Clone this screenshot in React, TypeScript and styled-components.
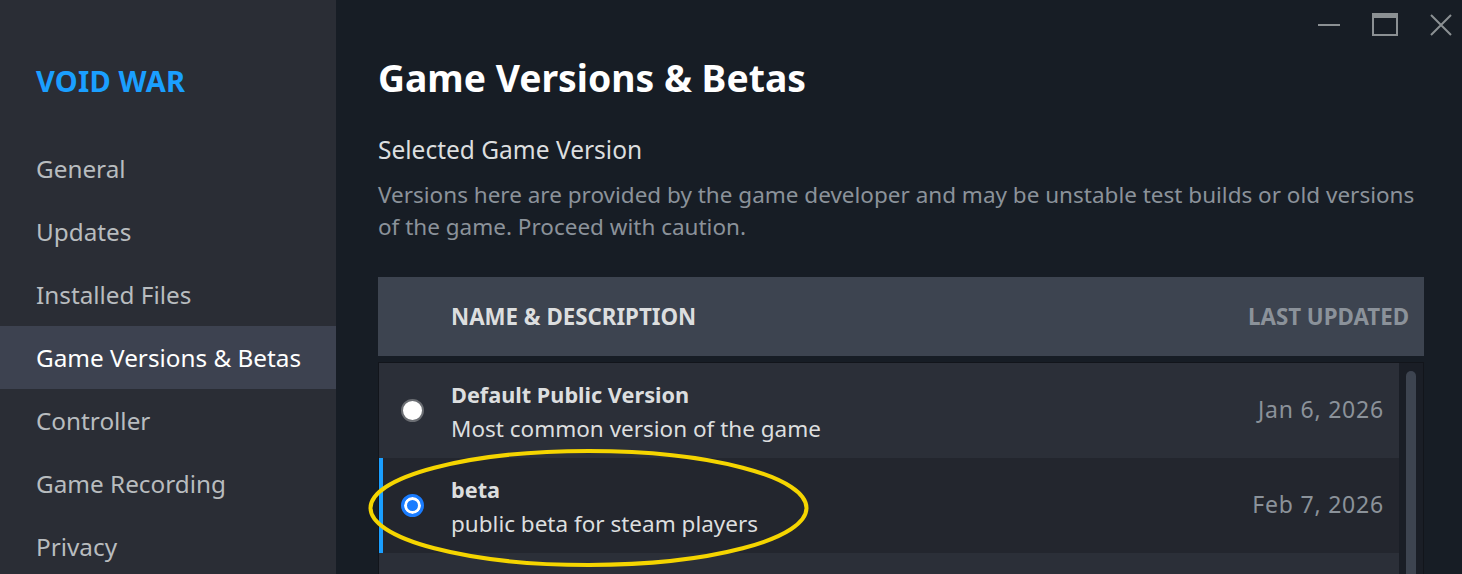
import React from "react";
import styled, { createGlobalStyle } from "styled-components";

const Global = createGlobalStyle`
  html, body { margin: 0; padding: 0; background: #171d25; }
  body { font-family: "Noto Sans", "Open Sans", sans-serif; -webkit-font-smoothing: antialiased; }
  * { box-sizing: border-box; }
`;

const Page = styled.div`
  position: relative;
  display: flex;
  width: 1462px;
  height: 574px;
  overflow: hidden;
  background: #171d25;
`;

const Sidebar = styled.nav`
  width: 336px;
  flex: none;
  background: #2a2d35;
  display: flex;
  flex-direction: column;
`;

const GameTitle = styled.div`
  height: 137px;
  flex: none;
  padding: 62px 0 0 36px;
  color: #1a9fff;
  font-weight: 700;
  font-size: 29px;
  line-height: 38px;
  letter-spacing: 0.2px;
`;

const NavItem = styled.div<{ $active?: boolean }>`
  height: 63px;
  flex: none;
  display: flex;
  align-items: center;
  padding-left: 36px;
  font-size: 24.3px;
  color: ${(p) => (p.$active ? "#ffffff" : "#b8bcbf")};
  background: ${(p) => (p.$active ? "#3d4250" : "transparent")};
`;

const Main = styled.main`
  flex: 1;
  min-width: 0;
  display: flex;
  flex-direction: column;
  padding: 0 38px 0 42px;
  & > * { flex: none; }
`;

const TitleBar = styled.div`
  height: 50px;
  display: flex;
  justify-content: flex-end;
  align-items: center;
  margin-right: -45px;
`;

const WinButton = styled.div`
  width: 56px;
  height: 50px;
  display: flex;
  align-items: center;
  justify-content: center;
`;

const Heading = styled.h1`
  margin: 3px 0 0;
  font-size: 37.3px;
  line-height: 50px;
  font-weight: 700;
  color: #ffffff;
`;

const SubHeading = styled.h2`
  margin: 32px 0 0;
  font-size: 24.5px;
  line-height: 30px;
  font-weight: 400;
  color: #dcdedf;
`;

const Description = styled.p`
  margin: 14px 0 0;
  font-size: 22.5px;
  line-height: 32px;
  color: #8b929a;
`;

const TableHeader = styled.div`
  margin-top: 34px;
  height: 79px;
  background: #3d4450;
  display: flex;
  align-items: center;
  padding: 0 15px 0 73px;
  font-size: 22.3px;
  font-weight: 700;
`;

const HeaderCell = styled.div<{ $muted?: boolean }>`
  flex: ${(p) => (p.$muted ? "none" : "1")};
  color: ${(p) => (p.$muted ? "#8b929a" : "#dcdedf")};
`;

const ListBox = styled.div`
  margin-top: 6px;
  && { flex: 1; }
  min-height: 0;
  overflow: hidden;
  display: flex;
  background: #1c2029;
  border-top: 1px solid #12151b;
  border-left: 1px solid #12151b;
  border-right: 1px solid #12151b;
`;

const Rows = styled.div`
  flex: 1;
  display: flex;
  flex-direction: column;
`;

const Row = styled.div<{ $selected?: boolean }>`
  height: 95px;
  flex: none;
  display: flex;
  align-items: center;
  padding-right: 15px;
  background: ${(p) => (p.$selected ? "#23262e" : "#2b2f38")};
  border-left: 4px solid ${(p) => (p.$selected ? "#1a9fff" : "transparent")};
`;

const RadioCell = styled.div`
  width: 58px;
  flex: none;
  display: flex;
  justify-content: center;
`;

const Radio = styled.div<{ $checked?: boolean }>`
  width: 23px;
  height: 23px;
  border-radius: 50%;
  background: ${(p) => (p.$checked ? "#1a7cff" : "#ffffff")};
  border: ${(p) => (p.$checked ? "3px solid #1a7cff" : "2px solid #6b6e73")};
  box-shadow: ${(p) => (p.$checked ? "inset 0 0 0 3px #ffffff" : "none")};
`;

const TextCell = styled.div`
  flex: 1;
  display: flex;
  flex-direction: column;
  gap: 3px;
  padding-left: 10px;
  padding-top: 2px;
`;

const RowTitle = styled.div`
  font-size: 21.7px;
  line-height: 30px;
  font-weight: 700;
  color: #dcdedf;
`;

const RowDesc = styled.div`
  font-size: 22.5px;
  line-height: 31px;
  color: #dcdedf;
`;

const DateCell = styled.div`
  font-size: 23px;
  letter-spacing: 0.8px;
  color: #8b929a;
  margin-top: -4px;
`;

const ScrollTrack = styled.div`
  width: 24px;
  flex: none;
  background: #1a1e26;
  padding: 8px 7px 0 7px;
`;

const Thumb = styled.div`
  height: 300px;
  width: 10px;
  border-radius: 5px;
  background: #3d4450;
`;

const Annotation = styled.svg`
  position: absolute;
  left: 0;
  top: 0;
  pointer-events: none;
`;

const navItems = [
  "General",
  "Updates",
  "Installed Files",
  "Game Versions & Betas",
  "Controller",
  "Game Recording",
  "Privacy",
];

const versions = [
  { name: "Default Public Version", desc: "Most common version of the game", date: "Jan 6, 2026", selected: false },
  { name: "beta", desc: "public beta for steam players", date: "Feb 7, 2026", selected: true },
  { name: "", desc: "", date: "", selected: false },
];

export default function App() {
  return (
    <>
      <Global />
      <Page>
        <Sidebar>
          <GameTitle>VOID WAR</GameTitle>
          {navItems.map((n) => (
            <NavItem key={n} $active={n === "Game Versions & Betas"}>
              {n}
            </NavItem>
          ))}
        </Sidebar>
        <Main>
          <TitleBar>
            <WinButton>
              <svg width="24" height="4" viewBox="0 0 24 4">
                <rect x="1" y="1" width="22" height="2" fill="#8b9093" />
              </svg>
            </WinButton>
            <WinButton>
              <svg width="26" height="24" viewBox="0 0 26 24">
                <rect x="1" y="1" width="24" height="21" fill="none" stroke="#8b9093" strokeWidth="2" />
                <rect x="1" y="1" width="24" height="4" fill="#8b9093" />
              </svg>
            </WinButton>
            <WinButton>
              <svg width="22" height="22" viewBox="0 0 22 22">
                <path d="M1 1 L21 21 M21 1 L1 21" stroke="#8b9093" strokeWidth="2" />
              </svg>
            </WinButton>
          </TitleBar>
          <Heading>Game Versions &amp; Betas</Heading>
          <SubHeading>Selected Game Version</SubHeading>
          <Description>
            Versions here are provided by the game developer and may be unstable test builds or old versions of the
            game. Proceed with caution.
          </Description>
          <TableHeader>
            <HeaderCell>NAME &amp; DESCRIPTION</HeaderCell>
            <HeaderCell $muted>LAST UPDATED</HeaderCell>
          </TableHeader>
          <ListBox>
            <Rows>
              {versions.map((v, i) => (
                <Row key={i} $selected={v.selected}>
                  {v.name && (
                    <>
                      <RadioCell>
                        <Radio $checked={v.selected} />
                      </RadioCell>
                      <TextCell>
                        <RowTitle>{v.name}</RowTitle>
                        <RowDesc>{v.desc}</RowDesc>
                      </TextCell>
                      <DateCell>{v.date}</DateCell>
                    </>
                  )}
                </Row>
              ))}
            </Rows>
            <ScrollTrack>
              <Thumb />
            </ScrollTrack>
          </ListBox>
        </Main>
        <Annotation width="1462" height="574" viewBox="0 0 1462 574">
          <ellipse cx="588.5" cy="508" rx="218" ry="57" fill="none" stroke="#f5d500" strokeWidth="4" />
        </Annotation>
      </Page>
    </>
  );
}
